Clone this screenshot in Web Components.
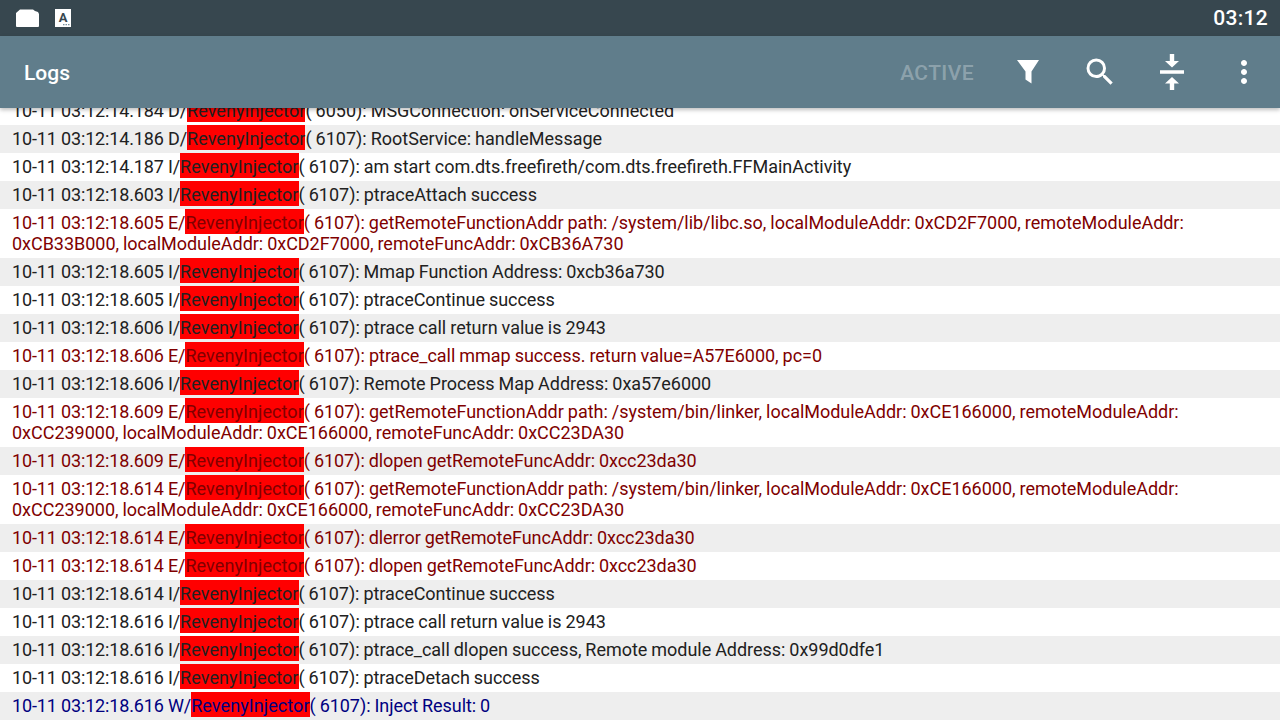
<!DOCTYPE html>
<html>
<head>
<meta charset="utf-8">
<title>Logs</title>
<style>
  html, body { margin: 0; height: 100%; overflow: hidden; background: #fff; }
  body { display: flex; flex-direction: column; font-family: Roboto, sans-serif; }
</style>
</head>
<body>
<status-bar time="03:12"></status-bar>
<app-toolbar title="Logs"></app-toolbar>
<log-list>
  <log-row level="D" time="10-11 03:12:14.184" pid="6050">MSGConnection: onServiceConnected</log-row>
  <log-row level="D" time="10-11 03:12:14.186" pid="6107">RootService: handleMessage</log-row>
  <log-row level="I" time="10-11 03:12:14.187" pid="6107">am start com.dts.freefireth/com.dts.freefireth.FFMainActivity</log-row>
  <log-row level="I" time="10-11 03:12:18.603" pid="6107">ptraceAttach success</log-row>
  <log-row level="E" time="10-11 03:12:18.605" pid="6107" style="--fit:-.03px">getRemoteFunctionAddr path: /system/lib/libc.so, localModuleAddr: 0xCD2F7000, remoteModuleAddr: 0xCB33B000, localModuleAddr: 0xCD2F7000, remoteFuncAddr: 0xCB36A730</log-row>
  <log-row level="I" time="10-11 03:12:18.605" pid="6107" style="--fit:-.03px">Mmap Function Address: 0xcb36a730</log-row>
  <log-row level="I" time="10-11 03:12:18.605" pid="6107" style="--fit:-.04px">ptraceContinue success</log-row>
  <log-row level="I" time="10-11 03:12:18.606" pid="6107">ptrace call return value is 2943</log-row>
  <log-row level="E" time="10-11 03:12:18.606" pid="6107" style="--fit:-.02px">ptrace_call mmap success. return value=A57E6000, pc=0</log-row>
  <log-row level="I" time="10-11 03:12:18.606" pid="6107" style="--fit:-.02px">Remote Process Map Address: 0xa57e6000</log-row>
  <log-row level="E" time="10-11 03:12:18.609" pid="6107" style="--fit:-.02px">getRemoteFunctionAddr path: /system/bin/linker, localModuleAddr: 0xCE166000, remoteModuleAddr: 0xCC239000, localModuleAddr: 0xCE166000, remoteFuncAddr: 0xCC23DA30</log-row>
  <log-row level="E" time="10-11 03:12:18.609" pid="6107" style="--fit:-.05px">dlopen getRemoteFuncAddr: 0xcc23da30</log-row>
  <log-row level="E" time="10-11 03:12:18.614" pid="6107" style="--fit:-.02px">getRemoteFunctionAddr path: /system/bin/linker, localModuleAddr: 0xCE166000, remoteModuleAddr: 0xCC239000, localModuleAddr: 0xCE166000, remoteFuncAddr: 0xCC23DA30</log-row>
  <log-row level="E" time="10-11 03:12:18.614" pid="6107" style="--fit:-.05px">dlerror getRemoteFuncAddr: 0xcc23da30</log-row>
  <log-row level="E" time="10-11 03:12:18.614" pid="6107" style="--fit:-.05px">dlopen getRemoteFuncAddr: 0xcc23da30</log-row>
  <log-row level="I" time="10-11 03:12:18.614" pid="6107" style="--fit:-.04px">ptraceContinue success</log-row>
  <log-row level="I" time="10-11 03:12:18.616" pid="6107">ptrace call return value is 2943</log-row>
  <log-row level="I" time="10-11 03:12:18.616" pid="6107" style="--fit:-.03px">ptrace_call dlopen success, Remote module Address: 0x99d0dfe1</log-row>
  <log-row level="I" time="10-11 03:12:18.616" pid="6107" style="--fit:-.04px">ptraceDetach success</log-row>
  <log-row level="W" time="10-11 03:12:18.616" pid="6107" style="--fit:-.05px">Inject Result: 0</log-row>
</log-list>
<script>
class StatusBar extends HTMLElement {
  connectedCallback() {
    this.attachShadow({ mode: 'open' });
    this.shadowRoot.innerHTML = `
      <style>
        :host { display: flex; flex: none; height: 36px; align-items: center; background: #37474f; color: #fff; padding: 0 12px 0 16px; font: 500 21px Roboto, sans-serif; letter-spacing: .3px; }
        .icons { display: flex; align-items: center; gap: 16px; flex: 1; }
        svg { display: block; }
        text { font: 700 13px Roboto, sans-serif; letter-spacing: 0; }
      </style>
      <div class="icons">
        <svg width="23" height="18" viewBox="0 0 23 18"><path d="M4 0.500H17L19 2 22 3 23 5V17a1 1 0 0 1-1 1H1a1 1 0 0 1-1-1V4z" fill="#fff"/></svg>
        <svg width="16" height="18" viewBox="0 0 16 18"><path d="M0 0H16V18H0z" fill="#fff"/><text x="8" y="12.500" text-anchor="middle" fill="#37474f">A</text><path d="M8 15h1.500v1.200H8zM10.500 15H12v1.200h-1.500zM13 15h1.500v1.200H13z" fill="#78909c"/></svg>
      </div>
      <span>${this.getAttribute('time')}</span>`;
  }
}

class AppToolbar extends HTMLElement {
  connectedCallback() {
    this.attachShadow({ mode: 'open' });
    this.shadowRoot.innerHTML = `
      <style>
        :host { display: flex; flex: none; height: 72px; align-items: center; position: relative; z-index: 2; background: #607d8b; color: #fff; padding: 0 0 0 24px; box-shadow: 0 2px 4px rgba(0,0,0,.25); font-family: Roboto, sans-serif; }
        .title { flex: 1; font-size: 21px; font-weight: 500; padding-top: 2px; }
        .active { font-size: 21px; font-weight: 500; letter-spacing: .42px; color: rgba(255,255,255,.3); margin-right: 18px; padding-top: 2px; }
        .btn { width: 72px; height: 72px; display: flex; align-items: center; justify-content: center; }
        svg { width: 36px; height: 36px; fill: #fff; display: block; }
      </style>
      <span class="title">${this.getAttribute('title')}</span>
      <span class="active">ACTIVE</span>
      <div class="btn"><svg viewBox="0 0 36 36"><path d="M7 6H29L21.500 17.500V29.500L15.500 25.500V17.500z"/></svg></div>
      <div class="btn"><svg viewBox="0 0 24 24"><path d="M15.500 14h-.79l-.28-.27A6.471 6.471 0 0 0 16 9.500 6.500 6.500 0 1 0 9.500 16c1.610 0 3.090-.59 4.230-1.570l.27.28v.79l5 4.990L20.490 19l-4.990-5zm-6 0C7.010 14 5 11.990 5 9.500S7.010 5 9.500 5 14 7.010 14 9.500 11.990 14 9.500 14z"/></svg></div>
      <div class="btn"><svg viewBox="0 0 36 36"><path d="M6 16.300H30V19.700H6zM15.800 0H20.200V7H25L18 13.500 11 7H15.800zM18 23 25 29.500H20.200V36H15.800V29.500H11z"/></svg></div>
      <div class="btn"><svg viewBox="0 0 24 24"><path d="M12 8c1.100 0 2-.9 2-2s-.9-2-2-2-2 .9-2 2 .9 2 2 2zm0 2c-1.100 0-2 .9-2 2s.9 2 2 2 2-.9 2-2-.9-2-2-2zm0 6c-1.100 0-2 .9-2 2s.9 2 2 2 2-.9 2-2-.9-2-2-2z"/></svg></div>`;
  }
}

class LogList extends HTMLElement {
  connectedCallback() {
    this.attachShadow({ mode: 'open' });
    this.shadowRoot.innerHTML = `
      <style>
        :host { display: block; flex: 1; min-height: 0; overflow: hidden; }
        .inner { margin-top: -11px; }
        ::slotted(log-row:nth-child(even)) { background: #eee; }
      </style>
      <div class="inner"><slot></slot></div>`;
  }
}

const LEVEL_COLORS = { D: '#212121', I: '#212121', E: '#800000', W: '#000080' };

class LogRow extends HTMLElement {
  connectedCallback() {
    const level = this.getAttribute('level');
    this.attachShadow({ mode: 'open' });
    this.shadowRoot.innerHTML = `
      <style>
        :host { display: block; padding: 3px 12px 4px; font: 18px/21px Roboto, sans-serif; color: ${LEVEL_COLORS[level]}; }
        .head { letter-spacing: -.15px; }
        .tag { background: #f00; padding: 3px 0 1px; letter-spacing: .08px; }
        .msg { word-spacing: -.46px; letter-spacing: var(--fit, 0); }
      </style>
      <span class="head">${this.getAttribute('time')} ${level}/</span><span class="tag">RevenyInjector</span><span class="msg">( ${this.getAttribute('pid')}): <slot></slot></span>`;
  }
}

customElements.define('status-bar', StatusBar);
customElements.define('app-toolbar', AppToolbar);
customElements.define('log-list', LogList);
customElements.define('log-row', LogRow);
</script>
</body>
</html>
